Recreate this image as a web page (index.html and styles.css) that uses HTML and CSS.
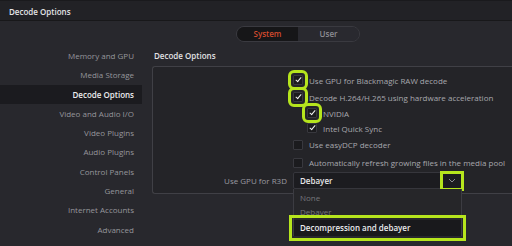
FILE: index.html
```html
<!DOCTYPE html>
<html lang="en">
  <head>
    <meta charset="UTF-8" />
    <title>Decode Options</title>
    <link rel="stylesheet" href="styles.css">
  </head>
  <body>
    <div class="titlebar">Decode Options</div>

    <div class="tabs">
      <div class="tab active">System</div>
      <div class="tab">User</div>
    </div>

    <div class="layout">
      <ul class="sidebar">
        <li>Memory and GPU</li>
        <li>Media Storage</li>
        <li class="selected">Decode Options</li>
        <li>Video and Audio I/O</li>
        <li>Video Plugins</li>
        <li>Audio Plugins</li>
        <li>Control Panels</li>
        <li>General</li>
        <li>Internet Accounts</li>
        <li>Advanced</li>
      </ul>

      <div class="main">
        <div class="section-title">Decode Options</div>
        <div class="panel">
          <div class="row">
            <span></span>
            <label class="check"><span class="box checked marked"></span>Use GPU for Blackmagic RAW decode</label>
          </div>
          <div class="row">
            <span></span>
            <label class="check"><span class="box checked marked"></span>Decode H.264/H.265 using hardware acceleration</label>
          </div>
          <div class="row sub">
            <span></span>
            <label class="check"><span class="box checked marked"></span>NVIDIA</label>
          </div>
          <div class="row sub">
            <span></span>
            <label class="check"><span class="box checked"></span>Intel Quick Sync</label>
          </div>
          <div class="row">
            <span></span>
            <label class="check"><span class="box"></span>Use easyDCP decoder</label>
          </div>
          <div class="row">
            <span></span>
            <label class="check"><span class="box"></span>Automatically refresh growing files in the media pool</label>
          </div>
          <div class="row">
            <span class="field-label">Use GPU for R3D</span>
            <div class="select">
              <span class="select-value">Debayer</span>
              <span class="chevron marked">
                <svg width="8" height="5" viewBox="0 0 8 5"><polyline points="1,1 4,4 7,1" fill="none" stroke="#8a8a90" stroke-width="1"/></svg>
              </span>
              <ul class="menu">
                <li>None</li>
                <li>Debayer</li>
                <li class="current marked">Decompression and debayer</li>
              </ul>
            </div>
          </div>
        </div>
      </div>
    </div>
  </body>
</html>
```

FILE: styles.css
```css
* {
  margin: 0;
  padding: 0;
  box-sizing: border-box;
}

body {
  font-family: "Open Sans", "DejaVu Sans", sans-serif;
  font-size: 8px;
  background: #28282d;
  color: #9c9ca2;
  width: 512px;
  height: 246px;
  overflow: hidden;
}

ul {
  list-style: none;
}

.titlebar {
  height: 21px;
  line-height: 22px;
  padding-left: 9px;
  background: #222226;
  border-top: 1px solid #1a1a1d;
  border-bottom: 1px solid #18181a;
  color: #e4e4e6;
  font-weight: 600;
}

/* System / User switch */
.tabs {
  display: flex;
  width: 124px;
  height: 16px;
  margin: 5px 0 0 236px;
  border: 1px solid #3a3a40;
  border-radius: 8px;
  overflow: hidden;
}

.tab {
  flex: 1;
  text-align: center;
  line-height: 14px;
  color: #8e8e94;
  font-weight: 600;
  background: #29292f;
}

.tab.active {
  background: #161618;
  color: #d14a2e;
}

.layout {
  display: flex;
  padding-top: 4px;
}

.sidebar {
  width: 142px;
  flex-shrink: 0;
}

.sidebar li {
  height: 19.3px;
  line-height: 19.3px;
  text-align: right;
  padding-right: 8px;
  color: #96969c;
}

.sidebar li.selected {
  background: #1b1b1f;
  color: #ececee;
  font-weight: 600;
}

.main {
  flex: 1;
  padding-left: 10px;
}

.section-title {
  height: 19.5px;
  line-height: 19.5px;
  padding-left: 2px;
  color: #e2e2e4;
  font-weight: 600;
}

.panel {
  position: relative;
  height: 128px;
  padding-top: 5px;
  background: #242428;
  border: 1px solid #404046;
  border-right: none;
  border-radius: 3px 0 0 3px;
}

.row {
  display: grid;
  grid-template-columns: 134px auto;
  column-gap: 6px;
  align-items: center;
  height: 17px;
}

.row:nth-child(5),
.row:nth-child(6),
.row:nth-child(7) {
  height: 18px;
}

.row.sub {
  height: 15px;
}

.check {
  display: flex;
  align-items: center;
  gap: 6px;
  color: #a8a8ae;
  white-space: nowrap;
}

.row.sub .check {
  padding-left: 14px;
}

.box {
  position: relative;
  width: 10px;
  height: 10px;
  background: #1b1b1e;
  border: 1px solid #38383e;
  border-radius: 1px;
}

.box.checked::after {
  content: "";
  position: absolute;
  left: 3px;
  top: 0px;
  width: 2px;
  height: 5px;
  border: solid #f2f2f2;
  border-width: 0 1.5px 1.5px 0;
  transform: rotate(40deg);
}

/* green callouts drawn over the screenshot */
.marked {
  outline: 3px solid #b6e51d;
  outline-offset: 2px;
}

.field-label {
  text-align: right;
  color: #9a9aa0;
}

.select {
  position: relative;
  display: flex;
  align-items: center;
  width: 169px;
  height: 17px;
  background: #1c1c20;
  border: 1px solid #36363c;
  border-radius: 2px;
}

.select-value {
  flex: 1;
  padding-left: 6px;
  color: #e6e6e8;
  font-weight: 600;
}

.chevron {
  display: flex;
  align-items: center;
  justify-content: center;
  width: 18px;
  height: 14px;
  margin-right: 0;
  outline-offset: 0;
}

.menu {
  position: absolute;
  left: -1px;
  top: 16px;
  width: 169px;
  height: 47px;
  padding-top: 2px;
  background: #262629;
  border: 1px solid #3c3c42;
  border-top: none;
  z-index: 5;
}

.menu li {
  height: 14px;
  line-height: 14px;
  padding-left: 6px;
  color: #76767c;
}

.menu li.current {
  height: 16px;
  line-height: 16px;
  margin-top: 1px;
  background: #19191c;
  color: #ececee;
  font-weight: 600;
}
```
